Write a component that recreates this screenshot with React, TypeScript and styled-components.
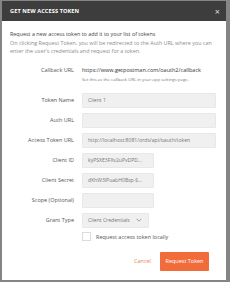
import { Fragment } from 'react';
import styled, { createGlobalStyle } from 'styled-components';

const GlobalStyle = createGlobalStyle`
html, body {
    margin: 0;
    padding: 0;
    background: #858585;
    font-family: "Open Sans", "Liberation Sans", sans-serif;
}
`;

const Dialog = styled.div`
margin: 1px 4px 0 2px;
height: 279px;
background: #ffffff;
display: flex;
flex-direction: column;
`;

const Header = styled.header`
height: 20px;
background: #3d3d3d;
color: #ffffff;
display: flex;
align-items: center;
justify-content: space-between;
padding: 0 6px 0 8px;
font-size: 5.6px;
font-weight: 700;
letter-spacing: 0.1px;
`;

const Close = styled.span`
font-size: 9px;
font-weight: 400;
color: #dddddd;
line-height: 1;
`;

const Body = styled.div`
padding: 9px 10px 0 8px;
display: flex;
flex-direction: column;
`;

const Intro = styled.p<{ $muted?: boolean }>`
margin: 0;
font-size: 5.4px;
line-height: 8.5px;
white-space: nowrap;
color: ${(p) => (p.$muted ? '#8c8c8c' : '#444444')};
`;

const Form = styled.div`
margin-top: 10px;
display: grid;
grid-template-columns: 64px 1fr;
column-gap: 8px;
row-gap: 5px;
align-items: center;
`;

const Label = styled.label`
font-size: 5.5px;
color: #555555;
text-align: right;
white-space: nowrap;
`;

const CallbackLabel = styled(Label)`
align-self: start;
line-height: 8.5px;
`;

const CallbackValue = styled.div`
display: flex;
flex-direction: column;
margin-bottom: 5px;
`;

const Url = styled.span`
font-size: 5.5px;
line-height: 8.5px;
color: #333333;
white-space: nowrap;
`;

const Hint = styled.span`
font-size: 4.3px;
line-height: 7px;
color: #777777;
margin-top: 1.5px;
white-space: nowrap;
`;

const Input = styled.div<{ $width?: number }>`
height: 15px;
box-sizing: border-box;
width: ${(p) => (p.$width ? `${p.$width}px` : '100%')};
background: #f0f0f0;
border: 1px solid #e8e8e8;
border-radius: 1px;
padding: 0 5px;
display: flex;
align-items: center;
font-size: 5.1px;
color: #777777;
white-space: nowrap;
overflow: hidden;
`;

const Select = styled(Input)`
justify-content: space-between;
padding-right: 6px;
`;

const Checkline = styled.div`
grid-column: 2;
display: flex;
align-items: center;
gap: 5px;
font-size: 5.5px;
color: #555555;
height: 8px;
`;

const Box = styled.span`
width: 7px;
height: 7px;
border: 1px solid #dcdcdc;
background: #ffffff;
`;

const Footer = styled.div`
margin-top: 11px;
display: flex;
justify-content: flex-end;
align-items: center;
gap: 9px;
padding-right: 7px;
`;

const Cancel = styled.span`
font-size: 5.5px;
color: #e8845a;
`;

const Primary = styled.button`
width: 49px;
height: 19px;
border: none;
border-radius: 1px;
background: #f26b3a;
color: #ffffff;
font-family: inherit;
font-size: 5.5px;
padding: 0;
`;

const fields: { label: string; value: string; width?: number }[] = [
    { label: 'Token Name', value: 'Client 1' },
    { label: 'Auth URL', value: '' },
    { label: 'Access Token URL', value: 'http://localhost:8081/ords/api/oauth/token' },
    { label: 'Client ID', value: 'kyPSXE3FXv2uPvDPD...', width: 72 },
    { label: 'Client Secret', value: 'dXhW3lPuabH0Bsp-S...', width: 72 },
    { label: 'Scope (Optional)', value: '', width: 72 },
];

function Chevron() {
    return (
        <svg width="6" height="4" viewBox="0 0 6 4">
            <path d="M0.5 0.7 L3 3.2 L5.5 0.7" fill="none" stroke="#888" strokeWidth="0.8" />
        </svg>
    );
}

export default function App() {
    return (
        <>
            <GlobalStyle />
            <Dialog>
                <Header>
                    <span>GET NEW ACCESS TOKEN</span>
                    <Close>×</Close>
                </Header>
                <Body>
                    <Intro>Request a new access token to add it to your list of tokens</Intro>
                    <Intro $muted>On clicking Request Token, you will be redirected to the Auth URL where you can</Intro>
                    <Intro $muted>enter the user's credentials and request for a token.</Intro>
                    <Form>
                        <CallbackLabel>Callback URL</CallbackLabel>
                        <CallbackValue>
                            <Url>https://www.getpostman.com/oauth2/callback</Url>
                            <Hint>Set this as the callback URL in your app settings page.</Hint>
                        </CallbackValue>
                        {fields.map((f) => (
                            <Fragment key={f.label}>
                                <Label>{f.label}</Label>
                                <Input $width={f.width}>{f.value}</Input>
                            </Fragment>
                        ))}
                        <Label>Grant Type</Label>
                        <Select $width={67}>
                            <span>Client Credentials</span>
                            <Chevron />
                        </Select>
                        <Checkline>
                            <Box />
                            <span>Request access token locally</span>
                        </Checkline>
                    </Form>
                    <Footer>
                        <Cancel>Cancel</Cancel>
                        <Primary>Request Token</Primary>
                    </Footer>
                </Body>
            </Dialog>
        </>
    );
}
